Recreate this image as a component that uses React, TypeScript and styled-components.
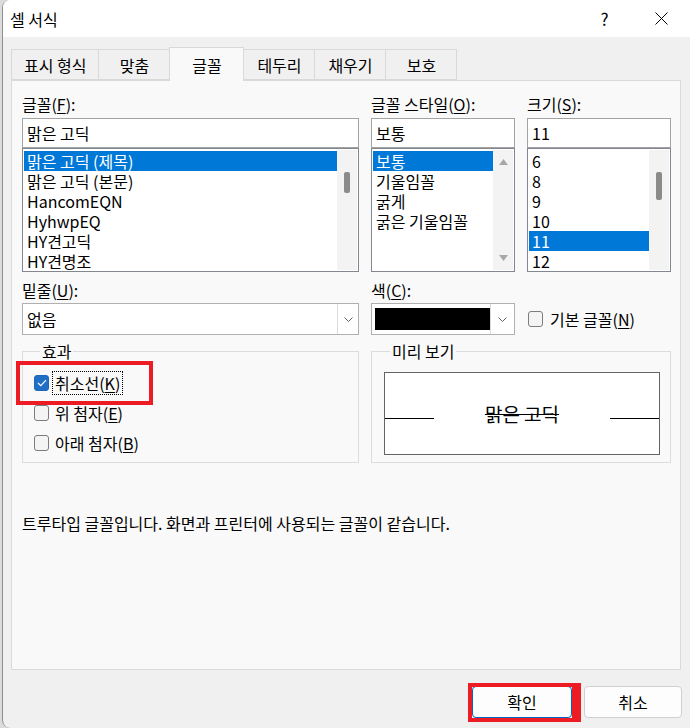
import React from 'react';
import styled, { createGlobalStyle } from 'styled-components';

const GlobalStyle = createGlobalStyle`
    html, body {
        margin: 0;
        padding: 0;
    }
    body {
        width: 690px;
        height: 728px;
        overflow: hidden;
        background: #dcdcdc;
        font-family: "Noto Sans CJK KR", "Noto Sans", sans-serif;
        font-size: 16px;
        color: #000;
    }
    * {
        box-sizing: border-box;
    }
`;

const Screen = styled.div`
    display: flex;
    height: 728px;
    padding-left: 2px;
`;

const Window = styled.div`
    flex: 1;
    display: flex;
    flex-direction: column;
    border-left: 1px solid #8f8f8f;
    border-radius: 8px 0 0 8px;
    overflow: hidden;
    background: #f0f0f0;
`;

const TitleBar = styled.div`
    height: 37px;
    flex-shrink: 0;
    display: flex;
    align-items: center;
    padding-left: 7px;
    background: #fff;
`;

const Title = styled.div`
    flex: 1;
    line-height: 20px;
`;

const CaptionButton = styled.div`
    width: 57px;
    height: 37px;
    display: flex;
    align-items: center;
    justify-content: center;
    font-size: 17px;
`;

const Body = styled.div`
    flex: 1;
    display: flex;
    flex-direction: column;
    padding: 10px 9px 10px 8px;
`;

const TabStrip = styled.div`
    display: flex;
    align-items: flex-end;
    height: 33px;
    position: relative;
    z-index: 2;
`;

const Tab = styled.div<{ $active?: boolean }>`
    height: ${p => (p.$active ? 34 : 31)}px;
    min-width: ${p => (p.$active ? 75 : 72)}px;
    margin-bottom: ${p => (p.$active ? -1 : 0)}px;
    padding: 0 12px;
    display: flex;
    align-items: center;
    justify-content: center;
    border: 1px solid #d9d9d9;
    border-bottom: ${p => (p.$active ? 'none' : '1px solid #d9d9d9')};
    margin-right: -1px;
    background: ${p => (p.$active ? '#f9f9f9' : '#f0f0f0')};
    position: relative;
    z-index: ${p => (p.$active ? 1 : 0)};
    white-space: nowrap;
`;

const Panel = styled.div`
    flex: 1;
    display: flex;
    flex-direction: column;
    padding: 13px 9px 0 10px;
    background: #f9f9f9;
    border: 1px solid #dadada;
    position: relative;
    z-index: 1;
`;

const FieldGrid = styled.div<{ $gap?: number }>`
    display: grid;
    grid-template-columns: 337px 144px 144px;
    column-gap: 12px;
    margin-top: ${p => p.$gap ?? 0}px;
`;

const Field = styled.div`
    display: flex;
    flex-direction: column;
`;

const Label = styled.div<{ $space?: number }>`
    line-height: 20px;
    margin-bottom: ${p => p.$space ?? 4}px;
    white-space: nowrap;
`;

const TextBox = styled.div`
    height: 30px;
    padding-left: 4px;
    line-height: 28px;
    border: 1px solid #a3a3a3;
    background: #fff;
`;

const ListBox = styled.div`
    height: 124px;
    display: flex;
    border: 1px solid #828790;
    background: #fff;
`;

const ListItems = styled.div`
    flex: 1;
    padding: 2px 0 0 1px;
    overflow: hidden;
`;

const ListItem = styled.div<{ $selected?: boolean }>`
    height: 20px;
    line-height: 20px;
    padding-left: 3px;
    white-space: nowrap;
    background: ${p => (p.$selected ? '#0078d7' : 'transparent')};
    color: ${p => (p.$selected ? '#fff' : '#000')};
`;

const ScrollTrack = styled.div<{ $thumbTop?: number; $arrows?: boolean }>`
    width: 20px;
    margin: 1px 1px 1px 0;
    display: flex;
    flex-direction: column;
    align-items: center;
    justify-content: ${p => (p.$arrows ? 'space-between' : 'flex-start')};
    padding: ${p => (p.$arrows ? '9px 0 9px' : `${p.$thumbTop ?? 0}px 0 0`)};
    background: #f3f3f3;
`;

const Thumb = styled.div<{ $height: number }>`
    width: 6px;
    height: ${p => p.$height}px;
    border-radius: 2px;
    background: #8b8b8b;
`;

const ComboBox = styled.div`
    height: 32px;
    display: flex;
    border: 1px solid #b0b0b0;
    background: #fff;
`;

const ComboText = styled.div`
    flex: 1;
    padding-left: 4px;
    line-height: 30px;
`;

const ColorSwatch = styled.div`
    flex: 1;
    margin: 4px 0 4px 3px;
    background: #000;
`;

const DropButton = styled.div<{ $width: number }>`
    width: ${p => p.$width}px;
    display: flex;
    align-items: center;
    justify-content: center;
    border-left: 1px solid #dcdcdc;
    background: #fff;
`;

const CheckLine = styled.div`
    align-self: end;
    height: 32px;
    display: flex;
    align-items: center;
    gap: 5px;
    padding-left: 1px;
    white-space: nowrap;
`;

const Box = styled.span<{ $checked?: boolean }>`
    width: 15px;
    height: 16px;
    flex-shrink: 0;
    display: inline-flex;
    align-items: center;
    justify-content: center;
    border-radius: 3px;
    border: 1px solid ${p => (p.$checked ? '#1a68c0' : '#7c7c7c')};
    background: ${p => (p.$checked ? '#1f6fc5' : '#f4f4f4')};
`;

const GroupBox = styled.fieldset<{ $pad: string; $span?: boolean }>`
    margin: 0;
    min-width: 0;
    padding: ${p => p.$pad};
    border: 1px solid #dcdcdc;
    grid-column: ${p => (p.$span ? 'span 2' : 'auto')};
`;

const Legend = styled.legend`
    margin-left: 6px;
    padding: 0 2px;
    line-height: 16px;
`;

const CheckRow = styled.div`
    height: 30px;
    display: flex;
    align-items: center;
    gap: 4px;
    position: relative;
    white-space: nowrap;
`;

const CheckText = styled.span<{ $focused?: boolean }>`
    padding: 1px 2px;
    line-height: 20px;
    outline: ${p => (p.$focused ? '1px dotted #000' : 'none')};
`;

const RedFrame = styled.span<{ $top: number; $left: number; $width: number; $height: number; $right?: number }>`
    position: absolute;
    top: ${p => p.$top}px;
    left: ${p => p.$left}px;
    width: ${p => p.$width}px;
    height: ${p => p.$height}px;
    border: 4px solid #ed1c24;
    border-right-width: ${p => p.$right ?? 4}px;
    pointer-events: none;
`;

const PreviewBox = styled.div`
    height: 83px;
    display: flex;
    align-items: center;
    border: 1px solid #646464;
    background: #fff;
`;

const BaseLine = styled.div`
    width: 49px;
    height: 1px;
    margin-top: 10px;
    background: #000;
`;

const PreviewText = styled.div`
    flex: 1;
    text-align: center;
    font-size: 19px;
    line-height: 22px;
    text-decoration: line-through;
    text-decoration-thickness: 1px;
`;

const Description = styled.div`
    margin-top: 50px;
    line-height: 20px;
`;

const Footer = styled.div`
    display: flex;
    justify-content: flex-end;
    gap: 12px;
    margin-top: 16px;
    margin-right: -1px;
`;

const ButtonWrap = styled.div`
    position: relative;
`;

const DialogButton = styled.button<{ $primary?: boolean; $width: number }>`
    width: ${p => p.$width}px;
    height: 32px;
    padding: 0;
    font: inherit;
    color: #000;
    background: #fdfdfd;
    border: 1px solid ${p => (p.$primary ? '#0067c0' : '#d0d0d0')};
    border-radius: 4px;
`;

const Key = styled.u`
    text-underline-offset: 2px;
`;

const Chevron = () => (
    <svg width="9" height="5" viewBox="0 0 9 5">
        <polyline points="0.5,0.5 4.5,4.5 8.5,0.5" fill="none" stroke="#606060" strokeWidth="1" />
    </svg>
);

const Arrow = ({ down }: { down?: boolean }) => (
    <svg width="9" height="6" viewBox="0 0 9 6">
        <polygon points={down ? '0,0 9,0 4.5,6' : '0,6 9,6 4.5,0'} fill="#a8a8a8" />
    </svg>
);

const Check = ({ checked, label, hotkey, focused }: { checked?: boolean; label: string; hotkey: string; focused?: boolean }) => (
    <>
        <Box $checked={checked}>
            {checked && (
                <svg width="10" height="8" viewBox="0 0 10 8">
                    <polyline points="1,4 3.8,6.6 9,1.2" fill="none" stroke="#fff" strokeWidth="1.2" />
                </svg>
            )}
        </Box>
        <CheckText $focused={focused}>
            {label}(<Key>{hotkey}</Key>)
        </CheckText>
    </>
);

const tabs = ['표시 형식', '맞춤', '글꼴', '테두리', '채우기', '보호'];
const fonts = ['맑은 고딕 (제목)', '맑은 고딕 (본문)', 'HancomEQN', 'HyhwpEQ', 'HY견고딕', 'HY견명조'];
const styles = ['보통', '기울임꼴', '굵게', '굵은 기울임꼴'];
const sizes = ['6', '8', '9', '10', '11', '12'];

const App: React.FC = () => {
    return (
        <>
            <GlobalStyle />
            <Screen>
                <Window>
                    <TitleBar>
                        <Title>셀 서식</Title>
                        <CaptionButton>?</CaptionButton>
                        <CaptionButton>
                            <svg width="13" height="13" viewBox="0 0 13 13">
                                <path d="M0.5 0.5 L12.5 12.5 M12.5 0.5 L0.5 12.5" stroke="#000" strokeWidth="1" />
                            </svg>
                        </CaptionButton>
                    </TitleBar>
                    <Body>
                        <TabStrip>
                            {tabs.map(t => (
                                <Tab key={t} $active={t === '글꼴'}>{t}</Tab>
                            ))}
                        </TabStrip>
                        <Panel>
                            <FieldGrid>
                                <Field>
                                    <Label>글꼴(<Key>F</Key>):</Label>
                                    <TextBox>맑은 고딕</TextBox>
                                    <ListBox>
                                        <ListItems>
                                            {fonts.map((f, i) => (
                                                <ListItem key={f} $selected={i === 0}>{f}</ListItem>
                                            ))}
                                        </ListItems>
                                        <ScrollTrack $thumbTop={22}>
                                            <Thumb $height={21} />
                                        </ScrollTrack>
                                    </ListBox>
                                </Field>
                                <Field>
                                    <Label>글꼴 스타일(<Key>O</Key>):</Label>
                                    <TextBox>보통</TextBox>
                                    <ListBox>
                                        <ListItems>
                                            {styles.map((s, i) => (
                                                <ListItem key={s} $selected={i === 0}>{s}</ListItem>
                                            ))}
                                        </ListItems>
                                        <ScrollTrack $arrows>
                                            <Arrow />
                                            <Arrow down />
                                        </ScrollTrack>
                                    </ListBox>
                                </Field>
                                <Field>
                                    <Label>크기(<Key>S</Key>):</Label>
                                    <TextBox>11</TextBox>
                                    <ListBox>
                                        <ListItems>
                                            {sizes.map(s => (
                                                <ListItem key={s} $selected={s === '11'}>{s}</ListItem>
                                            ))}
                                        </ListItems>
                                        <ScrollTrack $thumbTop={22}>
                                            <Thumb $height={28} />
                                        </ScrollTrack>
                                    </ListBox>
                                </Field>
                            </FieldGrid>

                            <FieldGrid $gap={8}>
                                <Field>
                                    <Label $space={3}>밑줄(<Key>U</Key>):</Label>
                                    <ComboBox>
                                        <ComboText>없음</ComboText>
                                        <DropButton $width={21}><Chevron /></DropButton>
                                    </ComboBox>
                                </Field>
                                <Field>
                                    <Label $space={3}>색(<Key>C</Key>):</Label>
                                    <ComboBox>
                                        <ColorSwatch />
                                        <DropButton $width={24}><Chevron /></DropButton>
                                    </ComboBox>
                                </Field>
                                <CheckLine>
                                    <Check label="기본 글꼴" hotkey="N" />
                                </CheckLine>
                            </FieldGrid>

                            <FieldGrid $gap={8}>
                                <GroupBox $pad="9px 0 4px 11px">
                                    <Legend>효과</Legend>
                                    <CheckRow>
                                        <Check checked focused label="취소선" hotkey="K" />
                                        <RedFrame $top={-7} $left={-18} $width={137} $height={44} />
                                    </CheckRow>
                                    <CheckRow>
                                        <Check label="위 첨자" hotkey="E" />
                                    </CheckRow>
                                    <CheckRow>
                                        <Check label="아래 첨자" hotkey="B" />
                                    </CheckRow>
                                </GroupBox>
                                <GroupBox $span $pad="13px 10px 7px 12px">
                                    <Legend>미리 보기</Legend>
                                    <PreviewBox>
                                        <BaseLine />
                                        <PreviewText>맑은 고딕</PreviewText>
                                        <BaseLine />
                                    </PreviewBox>
                                </GroupBox>
                            </FieldGrid>

                            <Description>트루타입 글꼴입니다. 화면과 프린터에 사용되는 글꼴이 같습니다.</Description>
                        </Panel>
                        <Footer>
                            <ButtonWrap>
                                <DialogButton $primary $width={100}>확인</DialogButton>
                                <RedFrame $top={-3} $left={-4} $width={113} $height={39} $right={9} />
                            </ButtonWrap>
                            <DialogButton $width={98}>취소</DialogButton>
                        </Footer>
                    </Body>
                </Window>
            </Screen>
        </>
    );
};

export default App;
